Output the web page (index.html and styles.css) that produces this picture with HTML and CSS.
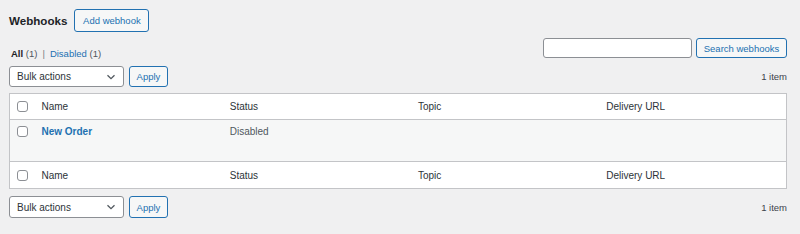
FILE: index.html
```html
<!DOCTYPE html>
<html>
<head>
<meta charset="utf-8">
<link rel="stylesheet" href="styles.css">
</head>
<body>
<div class="wrap">
  <div class="head">
    <h2 class="title">Webhooks</h2>
    <a class="btn btn-add">Add webhook</a>
  </div>
  <div class="filters">
    <ul class="subsubsub">
      <li><a class="current">All <span class="count">(1)</span></a><span class="sep">|</span></li>
      <li><a class="link">Disabled <span class="count">(1)</span></a></li>
    </ul>
    <div class="search-box">
      <input class="search-input" type="search">
      <button class="btn">Search webhooks</button>
    </div>
  </div>
  <div class="tablenav">
    <div class="actions">
      <div class="select">
        <span>Bulk actions</span>
        <svg class="chev" width="10" height="6" viewBox="0 0 10 6"><path d="M1.5 1.2 L5 4.6 L8.5 1.2" fill="none" stroke="#50575e" stroke-width="1.3"/></svg>
      </div>
      <button class="btn btn-apply">Apply</button>
    </div>
    <span class="count-items">1 item</span>
  </div>
  <table class="list">
    <colgroup><col class="c-cb"><col><col><col><col></colgroup>
    <thead>
      <tr><th class="cb"><span class="box"></span></th><th>Name</th><th>Status</th><th>Topic</th><th>Delivery URL</th></tr>
    </thead>
    <tbody>
      <tr><td class="cb"><span class="box"></span></td><td><a class="row-title">New Order</a></td><td>Disabled</td><td></td><td></td></tr>
    </tbody>
    <tfoot>
      <tr><td class="cb"><span class="box"></span></td><td>Name</td><td>Status</td><td>Topic</td><td>Delivery URL</td></tr>
    </tfoot>
  </table>
  <div class="tablenav bottom">
    <div class="actions">
      <div class="select">
        <span>Bulk actions</span>
        <svg class="chev" width="10" height="6" viewBox="0 0 10 6"><path d="M1.5 1.2 L5 4.6 L8.5 1.2" fill="none" stroke="#50575e" stroke-width="1.3"/></svg>
      </div>
      <button class="btn btn-apply">Apply</button>
    </div>
    <span class="count-items">1 item</span>
  </div>
</div>
</body>
</html>
```

FILE: styles.css
```css
html, body {
  margin: 0;
  padding: 0;
  background: #f0f0f1;
  font-family: "Liberation Sans", Arial, sans-serif;
  font-size: 10px;
  color: #3c434a;
}
.wrap {
  padding: 9px 13px 0 9px;
}
.head {
  display: flex;
  align-items: center;
  gap: 7px;
  height: 23px;
}
.title {
  margin: 0;
  font-size: 11.6px;
  font-weight: bold;
  color: #1d2327;
}
.btn {
  display: inline-flex;
  align-items: center;
  justify-content: center;
  box-sizing: border-box;
  height: 21px;
  padding: 0 7px;
  border: 1px solid #2271b1;
  border-radius: 3px;
  background: #f6f7f7;
  color: #2271b1;
  font-family: "Liberation Sans", Arial, sans-serif;
  font-size: 9.5px;
  cursor: pointer;
}
.btn-add {
  height: 23px;
  width: 75px;
  padding: 0;
}
.filters {
  display: flex;
  justify-content: space-between;
  align-items: flex-end;
  margin-top: 6px;
  height: 20px;
}
.subsubsub {
  list-style: none;
  margin: 0 0 -1px 2px;
  padding: 0;
  display: flex;
  font-size: 9.5px;
  color: #646970;
}
.subsubsub li { display: flex; }
.subsubsub .current {
  color: #1d2327;
  font-weight: bold;
}
.subsubsub .current .count,
.subsubsub .link .count {
  font-weight: normal;
  color: #50575e;
}
.subsubsub .link { color: #2271b1; }
.sep { margin: 0 5px; color: #787c82; }
.search-box {
  display: flex;
  gap: 4px;
  height: 20px;
}
.search-input {
  box-sizing: border-box;
  width: 149px;
  height: 20px;
  margin: 0;
  border: 1px solid #8c8f94;
  border-radius: 3px;
  background: #fff;
}
.search-box .btn { height: 20px; width: 91px; padding: 0; }
.tablenav {
  display: flex;
  justify-content: space-between;
  align-items: center;
  margin-top: 8px;
  height: 21px;
}
.tablenav.bottom { margin-top: 7px; height: 22px; }
.actions {
  display: flex;
  gap: 5px;
  height: 100%;
}
.select {
  box-sizing: border-box;
  width: 115px;
  height: 100%;
  display: flex;
  align-items: center;
  justify-content: space-between;
  padding: 0 7px 0 7px;
  background: #fff;
  border: 1px solid #8c8f94;
  border-radius: 3px;
  color: #2c3338;
  font-size: 10px;
}
.btn-apply { height: 100%; width: 39px; padding: 0; }
.count-items { color: #3c434a; font-size: 9.5px; }
.list {
  margin-top: 6px;
  width: 100%;
  border-collapse: collapse;
  table-layout: fixed;
  background: #fff;
  border: 1px solid #c3c4c7;
}
.c-cb { width: 24px; }
.list th, .list td {
  text-align: left;
  font-weight: normal;
  padding: 0 8px;
  color: #2c3338;
  vertical-align: middle;
}
.list thead th {
  height: 25px;
  border-bottom: 1px solid #c3c4c7;
}
.list tbody td {
  height: 42px;
  background: #f6f7f7;
  vertical-align: top;
  padding-top: 6px;
  box-sizing: border-box;
  color: #50575e;
}
.list tfoot td {
  height: 26px;
  border-top: 1px solid #c3c4c7;
}
.list .cb {
  padding: 0 0 0 7px;
}
.list tbody .cb { padding-top: 6px; }
.box {
  display: block;
  width: 11px;
  height: 11px;
  box-sizing: border-box;
  border: 1px solid #8c8f94;
  border-radius: 3px;
  background: #fff;
}
.row-title {
  color: #2271b1;
  font-weight: bold;
  font-size: 10px;
}
```
